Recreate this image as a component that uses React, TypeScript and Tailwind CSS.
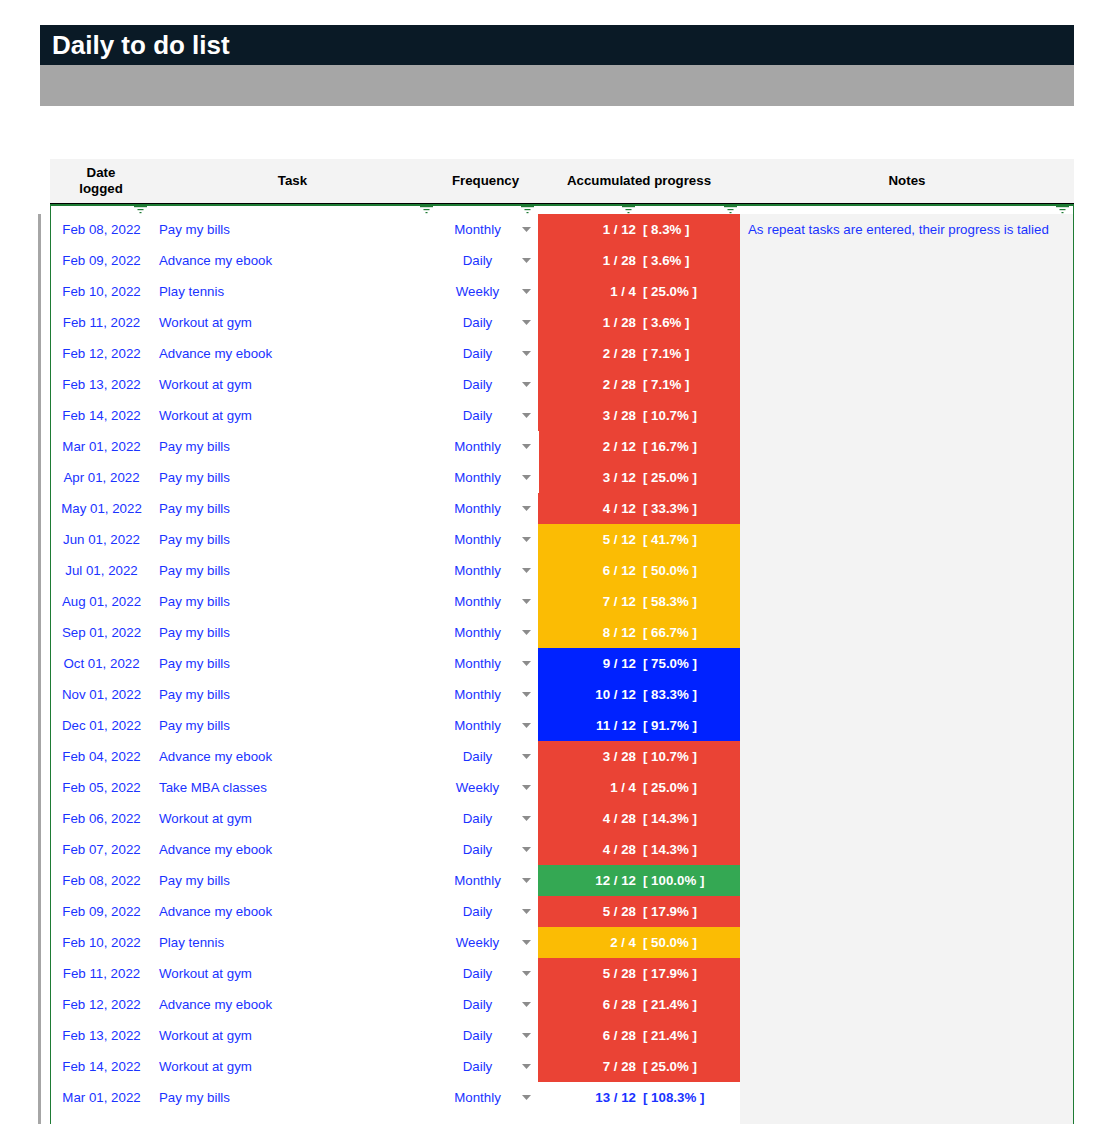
import React from 'react';

type Row = {
  date: string;
  task: string;
  freq: string;
  done: string;
  pct: string;
  fill: 'red' | 'yellow' | 'blue' | 'green' | 'none';
  gap?: boolean;
};

const rows: Row[] = [
  { date: 'Feb 08, 2022', task: 'Pay my bills', freq: 'Monthly', done: '1 / 12', pct: '8.3%', fill: 'red' },
  { date: 'Feb 09, 2022', task: 'Advance my ebook', freq: 'Daily', done: '1 / 28', pct: '3.6%', fill: 'red' },
  { date: 'Feb 10, 2022', task: 'Play tennis', freq: 'Weekly', done: '1 / 4', pct: '25.0%', fill: 'red' },
  { date: 'Feb 11, 2022', task: 'Workout at gym', freq: 'Daily', done: '1 / 28', pct: '3.6%', fill: 'red' },
  { date: 'Feb 12, 2022', task: 'Advance my ebook', freq: 'Daily', done: '2 / 28', pct: '7.1%', fill: 'red' },
  { date: 'Feb 13, 2022', task: 'Workout at gym', freq: 'Daily', done: '2 / 28', pct: '7.1%', fill: 'red' },
  { date: 'Feb 14, 2022', task: 'Workout at gym', freq: 'Daily', done: '3 / 28', pct: '10.7%', fill: 'red' },
  { date: 'Mar 01, 2022', task: 'Pay my bills', freq: 'Monthly', done: '2 / 12', pct: '16.7%', fill: 'red', gap: true },
  { date: 'Apr 01, 2022', task: 'Pay my bills', freq: 'Monthly', done: '3 / 12', pct: '25.0%', fill: 'red', gap: true },
  { date: 'May 01, 2022', task: 'Pay my bills', freq: 'Monthly', done: '4 / 12', pct: '33.3%', fill: 'red' },
  { date: 'Jun 01, 2022', task: 'Pay my bills', freq: 'Monthly', done: '5 / 12', pct: '41.7%', fill: 'yellow' },
  { date: 'Jul 01, 2022', task: 'Pay my bills', freq: 'Monthly', done: '6 / 12', pct: '50.0%', fill: 'yellow' },
  { date: 'Aug 01, 2022', task: 'Pay my bills', freq: 'Monthly', done: '7 / 12', pct: '58.3%', fill: 'yellow' },
  { date: 'Sep 01, 2022', task: 'Pay my bills', freq: 'Monthly', done: '8 / 12', pct: '66.7%', fill: 'yellow' },
  { date: 'Oct 01, 2022', task: 'Pay my bills', freq: 'Monthly', done: '9 / 12', pct: '75.0%', fill: 'blue' },
  { date: 'Nov 01, 2022', task: 'Pay my bills', freq: 'Monthly', done: '10 / 12', pct: '83.3%', fill: 'blue' },
  { date: 'Dec 01, 2022', task: 'Pay my bills', freq: 'Monthly', done: '11 / 12', pct: '91.7%', fill: 'blue' },
  { date: 'Feb 04, 2022', task: 'Advance my ebook', freq: 'Daily', done: '3 / 28', pct: '10.7%', fill: 'red' },
  { date: 'Feb 05, 2022', task: 'Take MBA classes', freq: 'Weekly', done: '1 / 4', pct: '25.0%', fill: 'red' },
  { date: 'Feb 06, 2022', task: 'Workout at gym', freq: 'Daily', done: '4 / 28', pct: '14.3%', fill: 'red' },
  { date: 'Feb 07, 2022', task: 'Advance my ebook', freq: 'Daily', done: '4 / 28', pct: '14.3%', fill: 'red' },
  { date: 'Feb 08, 2022', task: 'Pay my bills', freq: 'Monthly', done: '12 / 12', pct: '100.0%', fill: 'green' },
  { date: 'Feb 09, 2022', task: 'Advance my ebook', freq: 'Daily', done: '5 / 28', pct: '17.9%', fill: 'red' },
  { date: 'Feb 10, 2022', task: 'Play tennis', freq: 'Weekly', done: '2 / 4', pct: '50.0%', fill: 'yellow' },
  { date: 'Feb 11, 2022', task: 'Workout at gym', freq: 'Daily', done: '5 / 28', pct: '17.9%', fill: 'red' },
  { date: 'Feb 12, 2022', task: 'Advance my ebook', freq: 'Daily', done: '6 / 28', pct: '21.4%', fill: 'red' },
  { date: 'Feb 13, 2022', task: 'Workout at gym', freq: 'Daily', done: '6 / 28', pct: '21.4%', fill: 'red' },
  { date: 'Feb 14, 2022', task: 'Workout at gym', freq: 'Daily', done: '7 / 28', pct: '25.0%', fill: 'red' },
  { date: 'Mar 01, 2022', task: 'Pay my bills', freq: 'Monthly', done: '13 / 12', pct: '108.3%', fill: 'none' },
];

const fillClass: Record<Row['fill'], string> = {
  red: 'bg-[#ea4335] text-white',
  yellow: 'bg-[#fbbc04] text-white',
  blue: 'bg-[#0022ff] text-white',
  green: 'bg-[#34a853] text-white',
  none: 'bg-white text-[#1a33ff]',
};

const FilterIcon = () => (
  <svg width="13" height="8" viewBox="0 0 13 8" className="block">
    <rect x="0" y="0" width="13" height="1.2" fill="#1e7b34" />
    <rect x="3.5" y="3" width="6" height="1.2" fill="#1e7b34" />
    <rect x="5.5" y="6" width="2" height="1.2" fill="#1e7b34" />
  </svg>
);

const Caret = () => (
  <svg width="9" height="5" viewBox="0 0 9 5" className="block">
    <path d="M0 0 L9 0 L4.5 5 Z" fill="#8c8c8c" />
  </svg>
);

export default function App() {
  return (
    <div className="min-h-[1124px] bg-white pt-[25px] font-['Liberation_Sans',Arial,sans-serif] text-[13.3px]">
      <div className="ml-[40px] w-[1034px]">
        <div className="h-[40px] bg-[#0a1a26] pl-[12px] flex items-center">
          <h1 className="text-[26px] font-bold text-white leading-none">Daily to do list</h1>
        </div>
        <div className="h-[41px] bg-[#a6a6a6]" />
      </div>

      <div className="ml-[38px] mt-[53px] w-[1036px]">
        {/* header */}
        <div className="ml-[12px] w-[1024px] h-[44px] bg-[#f3f3f3] flex items-center font-bold text-black leading-[16px]">
          <div className="w-[102px] text-center">Date<br />logged</div>
          <div className="w-[281px] text-center">Task</div>
          <div className="w-[105px] text-center">Frequency</div>
          <div className="w-[202px] text-center">Accumulated progress</div>
          <div className="flex-1 text-center">Notes</div>
        </div>
        <div className="ml-[12px] w-[1024px] h-px bg-black" />
        <div className="ml-[12px] w-[1024px] h-[2px] bg-[#1e7b34]" />

        <div className="flex">
          <div className="w-[3px] mt-[8px] bg-[#a6a6a6]" />
          <div className="ml-[9px] w-[1024px] border-l border-r border-[#1e7b34]">
            {/* filter row */}
            <div className="h-[8px] flex">
              <div className="w-[101px] flex justify-end pr-[5px]"><FilterIcon /></div>
              <div className="w-[281px] flex justify-end"><FilterIcon /></div>
              <div className="w-[105px] flex justify-end pr-[4px]"><FilterIcon /></div>
              <div className="w-[101px] flex justify-end pr-[4px]"><FilterIcon /></div>
              <div className="w-[101px] flex justify-end pr-[3px]"><FilterIcon /></div>
              <div className="flex-1 flex justify-end pr-[4px]"><FilterIcon /></div>
            </div>

            {rows.map((r, i) => (
              <div key={i} className="h-[31px] flex text-[#1a33ff]">
                <div className="w-[101px] flex items-center justify-center">{r.date}</div>
                <div className="w-[281px] flex items-center pl-[7px]">{r.task}</div>
                <div className="w-[105px] flex items-center">
                  <span className="w-[89px] text-center">{r.freq}</span>
                  <Caret />
                </div>
                <div className={`w-[202px] flex items-center font-bold ${fillClass[r.fill]} ${r.gap ? 'border-l border-white' : ''}`}>
                  <span className={`text-right pr-[3px] ${r.gap ? 'w-[100px]' : 'w-[101px]'}`}>{r.done}</span>
                  <span className="flex-1 pl-[4px] whitespace-pre">{`[ ${r.pct} ]`}</span>
                </div>
                <div className="flex-1 bg-[#f3f3f3] flex items-center pl-[8px]">
                  {i === 0 ? 'As repeat tasks are entered, their progress is talied' : ''}
                </div>
              </div>
            ))}

            <div className="h-[31px] flex">
              <div className="w-[689px]" />
              <div className="flex-1 bg-[#f3f3f3]" />
            </div>
          </div>
        </div>
      </div>
    </div>
  );
}
